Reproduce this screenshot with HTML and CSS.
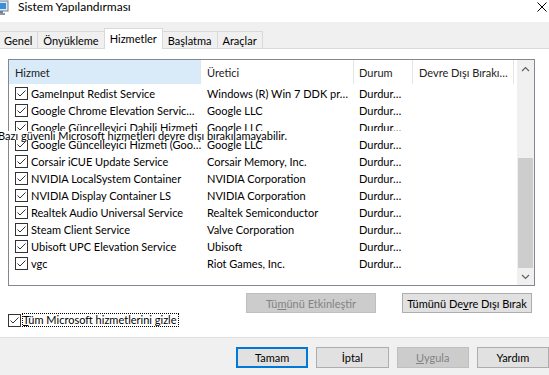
FILE: index.html
```html
<!DOCTYPE html>
<html lang="tr">

<head>
    <meta charset="UTF-8">
    <meta name="viewport" content="width=device-width, initial-scale=1.0">
    <title>Sistem Yapılandırması</title>
    <link rel="stylesheet" href="styles.css">
</head>

<body>
    <div class="titlebar">
        <svg class="app-icon" width="16" height="16" viewBox="0 0 16 16">
            <rect x="1" y="1" width="14" height="10" fill="#dfe9f3" stroke="#6d7f93"/>
            <rect x="3" y="3" width="10" height="6" fill="#3b8fd9"/>
            <rect x="6" y="11" width="4" height="2" fill="#6d7f93"/>
            <rect x="4" y="13" width="8" height="2" fill="#8a98a8"/>
        </svg>
        <span class="title">Sistem Yapılandırması</span>
        <svg class="close" width="10" height="10" viewBox="0 0 10 10">
            <path d="M0.5 0.5 L9.5 9.5 M9.5 0.5 L0.5 9.5" stroke="#000" stroke-width="1"/>
        </svg>
    </div>

    <div class="tabs">
        <div class="tab">Genel</div>
        <div class="tab">Önyükleme</div>
        <div class="tab active">Hizmetler</div>
        <div class="tab">Başlatma</div>
        <div class="tab">Araçlar</div>
    </div>

    <div class="page">
        <div class="list">
            <div class="list-main">
                <div class="head">
                    <div class="col c1 sorted">Hizmet</div>
                    <div class="col c2">Üretici</div>
                    <div class="col c3">Durum</div>
                    <div class="col c4">Devre Dışı Bırakı…</div>
                </div>
                <div class="rows" id="rows"></div>
            </div>
            <div class="scrollbar">
                <div class="arrow">
                    <svg width="9" height="6" viewBox="0 0 9 6"><path d="M1 5 L4.5 1.5 L8 5" fill="none" stroke="#606060" stroke-width="1.2"/></svg>
                </div>
                <div class="track"><div class="thumb"></div></div>
                <div class="arrow">
                    <svg width="9" height="6" viewBox="0 0 9 6"><path d="M1 1 L4.5 4.5 L8 1" fill="none" stroke="#606060" stroke-width="1.2"/></svg>
                </div>
            </div>
        </div>

        <!-- uyarı etiketi listenin üstüne biniyor -->
        <div class="notice">Bazı güvenli Microsoft hizmetleri devre dışı bırakılamayabilir.</div>

        <div class="list-actions">
            <button class="btn wide" disabled>Tü<u>m</u>ünü Etkinleştir</button>
            <button class="btn wide">Tümünü De<u>v</u>re Dışı Bırak</button>
        </div>

        <label class="hide-ms">
            <svg class="check" width="13" height="13" viewBox="0 0 13 13">
                <rect x="0.5" y="0.5" width="12" height="12" fill="#fff" stroke="#333"/>
                <path d="M2.5 6.5 L5 9 L10.5 3.5" fill="none" stroke="#333" stroke-width="1"/>
            </svg>
            <span class="focus"><u>T</u>üm Microsoft hizmetlerini gizle</span>
        </label>
    </div>

    <div class="footer">
        <button class="btn default">Tamam</button>
        <button class="btn">İptal</button>
        <button class="btn" disabled><u>U</u>ygula</button>
        <button class="btn">Yardım</button>
    </div>

    <script>
        const hizmetler = [
            ["GameInput Redist Service", "Windows (R) Win 7 DDK pr…"],
            ["Google Chrome Elevation Servic…", "Google LLC"],
            ["Google Güncelleyici Dahili Hizmeti", "Google LLC"],
            ["Google Güncelleyici Hizmeti (Goo…", "Google LLC"],
            ["Corsair iCUE Update Service", "Corsair Memory, Inc."],
            ["NVIDIA LocalSystem Container", "NVIDIA Corporation"],
            ["NVIDIA Display Container LS", "NVIDIA Corporation"],
            ["Realtek Audio Universal Service", "Realtek Semiconductor"],
            ["Steam Client Service", "Valve Corporation"],
            ["Ubisoft UPC Elevation Service", "Ubisoft"],
            ["vgc", "Riot Games, Inc."]
        ];

        const checkSvg = '<svg class="check" width="13" height="13" viewBox="0 0 13 13">' +
            '<rect x="0.5" y="0.5" width="12" height="12" fill="#fff" stroke="#333"/>' +
            '<path d="M2.5 6.5 L5 9 L10.5 3.5" fill="none" stroke="#333" stroke-width="1"/></svg>';

        const rows = document.getElementById("rows");
        hizmetler.forEach(([ad, uretici]) => {
            const row = document.createElement("div");
            row.className = "row";
            row.innerHTML =
                '<div class="cell c1">' + checkSvg + '<span>' + ad + '</span></div>' +
                '<div class="cell c2">' + uretici + '</div>' +
                '<div class="cell c3">Durdur…</div>' +
                '<div class="cell c4"></div>';
            rows.appendChild(row);
        });
    </script>
</body>

</html>
```

FILE: styles.css
```css
body {
    margin: 0;
    width: 549px;
    height: 375px;
    overflow: hidden;
    background: #fff;
    color: #000;
    font-family: "Segoe UI", Lato, "Liberation Sans", sans-serif;
    font-size: 11px;
}

button {
    font-family: inherit;
    font-size: 11px;
    white-space: nowrap;
}

/* başlık çubuğu */
.titlebar {
    height: 22px;
    display: flex;
    align-items: flex-start;
}

.app-icon {
    margin-left: -7px;
    margin-top: 0;
}

.title {
    margin-left: 9px;
    line-height: 14px;
    font-size: 12px;
}

.close {
    margin-left: auto;
    margin-right: 2px;
    margin-top: 2px;
}

/* sekmeler */
.tabs {
    height: 26px;
    display: flex;
    align-items: flex-end;
    background: #f0f0f0;
    border-bottom: 1px solid #d9d9d9;
    margin-left: -2px;
}

.tab {
    height: 16px;
    line-height: 18px;
    padding: 0 5px;
    border: 1px solid #d9d9d9;
    border-bottom: none;
    margin-right: -1px;
}

.tab.active {
    height: 20px;
    line-height: 19px;
    margin-bottom: -1px;
    background: #fff;
    position: relative;
    z-index: 1;
}

/* hizmet listesi */
.page {
    height: 288px;
    box-sizing: border-box;
    padding: 10px 0 0 8px;
    position: relative;
}

.list {
    width: 527px;
    height: 227px;
    box-sizing: border-box;
    border: 1px solid #828790;
    display: flex;
}

.list-main {
    width: 508px;
    overflow: hidden;
}

.head {
    display: flex;
    height: 24px;
}

.col {
    box-sizing: border-box;
    border-right: 1px solid #e5e5e5;
    padding-left: 6px;
    line-height: 26px;
    color: #222;
    white-space: nowrap;
    overflow: hidden;
}

.c1 { width: 192px; }
.c2 { width: 153px; }
.c3 { width: 59px; }
.c4 { width: 101px; }

.col.c3 { padding-left: 5px; }

.sorted {
    background: #d9ebf9;
}

.rows {
    padding-top: 1px;
}

.row {
    display: flex;
    height: 17px;
    line-height: 17px;
}

.cell {
    box-sizing: border-box;
    padding-left: 6px;
    white-space: nowrap;
    overflow: hidden;
}

.cell.c1 {
    display: flex;
    align-items: center;
    gap: 3px;
}

.cell.c3 { padding-left: 5px; }

.check {
    flex-shrink: 0;
    display: block;
}

.scrollbar {
    width: 17px;
    background: #f0f0f0;
    display: flex;
    flex-direction: column;
}

.arrow {
    height: 17px;
    display: flex;
    align-items: center;
    justify-content: center;
}

.track {
    flex: 1;
    display: flex;
    flex-direction: column;
    justify-content: flex-end;
    padding: 0 1px;
}

.thumb {
    height: 110px;
    background: #cdcdcd;
}

.notice {
    position: absolute;
    top: 82px;
    left: -2px;
    width: 519px;
    height: 9px;
    line-height: 10px;
    background: #fff;
    white-space: nowrap;
    z-index: 2;
}

/* düğmeler */
.btn {
    box-sizing: border-box;
    height: 21px;
    width: 73px;
    padding: 0;
    background: #e1e1e1;
    border: 1px solid #adadad;
    color: #000;
}

.btn:disabled {
    background: #cccccc;
    border-color: #bfbfbf;
    color: #838383;
}

.btn.wide {
    width: 130px;
    height: 20px;
}

.btn.default {
    border: 2px solid #0078d7;
}

.list-actions {
    display: flex;
    justify-content: flex-end;
    gap: 26px;
    margin-top: 7px;
    margin-right: 17px;
}

.hide-ms {
    display: flex;
    align-items: center;
    gap: 1px;
    height: 14px;
}

.focus {
    outline: 1px dotted #000;
    outline-offset: -1px;
    padding: 0 2px 0 1px;
    line-height: 14px;
}

.footer {
    height: 38px;
    box-sizing: border-box;
    background: #f0f0f0;
    border-top: 1px solid #dfdfdf;
    padding: 9px 0 0 236px;
    display: flex;
    align-items: flex-start;
    gap: 8px;
}
```
